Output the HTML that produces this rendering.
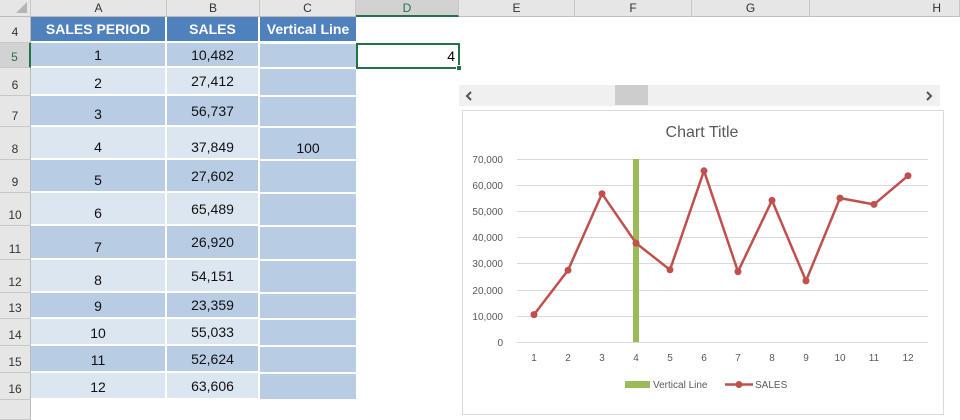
<!DOCTYPE html>
<html><head><meta charset="utf-8"><style>
*{margin:0;padding:0;box-sizing:border-box}
body{width:960px;height:409px;overflow:hidden;background:#fff;font-family:"Liberation Sans",sans-serif;position:relative}
.a{position:absolute}
.ch{position:absolute;top:0;height:17px;background:#e6e6e6;border-right:1px solid #c8c8c8;border-bottom:1px solid #bcbcbc;font-size:12px;color:#333;text-align:center;line-height:17px}
.rh{position:absolute;left:0;width:31px;background:#e6e6e6;border-bottom:1px solid #c8c8c8;border-right:1px solid #bcbcbc;font-size:12px;color:#333;text-align:center;display:flex;align-items:flex-end;justify-content:center;padding-bottom:3px}
.c{position:absolute;font-size:14px;color:#111;display:flex;align-items:center;justify-content:center;border-right:2px solid #fff;border-bottom:2px solid #fff}
.bt{align-items:flex-end;padding-bottom:3px}
</style></head><body>
<div class="ch" style="left:0;width:31px"><div class="a" style="right:3px;bottom:3px;width:0;height:0;border-left:11px solid transparent;border-bottom:11px solid #b4b4b4"></div></div>
<div class="ch" style="left:31px;width:136px">A</div>
<div class="ch" style="left:167px;width:93px">B</div>
<div class="ch" style="left:260px;width:96px">C</div>
<div class="ch" style="left:356px;width:103px;background:#d2d2d2;border-bottom:2px solid #217346;color:#217346">D</div>
<div class="ch" style="left:459px;width:116px">E</div>
<div class="ch" style="left:575px;width:117px">F</div>
<div class="ch" style="left:692px;width:118px">G</div>
<div class="ch" style="left:810px;width:150px;text-align:right;padding-right:18px">H</div>

<div class="rh" style="top:17px;height:26px">4</div>
<div class="rh" style="top:43px;height:25px;background:#d2d2d2;color:#217346;border-right:2px solid #217346">5</div>
<div class="rh" style="top:68px;height:28px">6</div>
<div class="rh" style="top:96px;height:31px">7</div>
<div class="rh" style="top:127px;height:33px">8</div>
<div class="rh" style="top:160px;height:33px">9</div>
<div class="rh" style="top:193px;height:33px">10</div>
<div class="rh" style="top:226px;height:34px">11</div>
<div class="rh" style="top:260px;height:33px">12</div>
<div class="rh" style="top:293px;height:26px">13</div>
<div class="rh" style="top:319px;height:27px">14</div>
<div class="rh" style="top:346px;height:27px">15</div>
<div class="rh" style="top:373px;height:27px">16</div>
<div class="rh" style="top:400px;height:20px"></div>

<div class="c" style="left:31px;top:17px;width:136px;height:26px;background:#4f81bd;color:#fff;font-weight:bold">SALES PERIOD</div>
<div class="c" style="left:167px;top:17px;width:93px;height:26px;background:#4f81bd;color:#fff;font-weight:bold">SALES</div>
<div class="c" style="left:260px;top:17px;width:96px;height:26px;background:#4f81bd;color:#fff;font-weight:bold;border-right:none">Vertical Line</div>

<div id="rows"></div>
<script>
var r=[[43,25,1,"10,482",0],[68,28,2,"27,412",1],[96,31,3,"56,737",0],[127,33,4,"37,849",1],[160,33,5,"27,602",0],[193,33,6,"65,489",1],[226,34,7,"26,920",0],[260,33,8,"54,151",1],[293,26,9,"23,359",0],[319,27,10,"55,033",1],[346,27,11,"52,624",0],[373,27,12,"63,606",1]];
var h="";
r.forEach(function(x){var bg=x[4]?"#dce6f1":"#b8cce4";
h+='<div class="c bt" style="left:31px;top:'+x[0]+'px;width:136px;height:'+x[1]+'px;background:'+bg+'">'+x[2]+'</div>';
h+='<div class="c'+(x[2]==4?' bt':'')+'" style="left:167px;top:'+x[0]+'px;width:93px;height:'+x[1]+'px;background:'+bg+'">'+x[3]+'</div>';
h+='<div class="c'+(x[2]==4?' bt':'')+'" style="left:260px;top:'+(x[0]+1)+'px;width:96px;height:'+x[1]+'px;background:#b8cce4;border-right:none">'+(x[2]==4?'100':'')+'</div>';});
document.getElementById("rows").innerHTML=h;
</script>
<div class="a" style="left:356px;top:43px;width:104px;height:26px;border:2px solid #217346;font-size:14px;text-align:right;padding-right:3px;line-height:22px">4</div>
<div class="a" style="left:456px;top:65px;width:6px;height:6px;background:#217346;border:1px solid #fff"></div>

<div class="a" style="left:459px;top:85px;width:481px;height:21px;background:#f0f0f0"></div>
<div class="a" style="left:615px;top:85px;width:33px;height:20px;background:#cdcdcd"></div>
<svg class="a" style="left:0;top:0" width="960" height="409">
<polyline points="471,92 467,96 471,100" fill="none" stroke="#555" stroke-width="2"/>
<polyline points="927,92 931,96 927,100" fill="none" stroke="#555" stroke-width="2"/>
</svg>

<div class="a" style="left:462px;top:110px;width:482px;height:305px;border:1px solid #d9d9d9;background:#fff"></div>
<svg class="a" style="left:0;top:0" width="960" height="409">
<g stroke="#d9d9d9" stroke-width="1">
<line x1="517" x2="928" y1="159.5" y2="159.5"/><line x1="517" x2="928" y1="185.5" y2="185.5"/><line x1="517" x2="928" y1="211.5" y2="211.5"/><line x1="517" x2="928" y1="237.5" y2="237.5"/><line x1="517" x2="928" y1="263.5" y2="263.5"/><line x1="517" x2="928" y1="290.5" y2="290.5"/><line x1="517" x2="928" y1="316.5" y2="316.5"/><line x1="517" x2="928" y1="342.5" y2="342.5"/>
</g>
<rect x="633" y="159" width="6" height="183" fill="#9bbb59"/>
<polyline fill="none" stroke="#c0504d" stroke-width="2.5" stroke-linejoin="round" points="534,314.6 568,270.3 602,193.7 636,243.1 670,269.8 704,170.8 738,271.6 772,200.4 806,280.9 840,198.1 874,204.4 908,175.7"/>
<g fill="#c0504d"><circle cx="534" cy="314.6" r="3.5"/><circle cx="568" cy="270.3" r="3.5"/><circle cx="602" cy="193.7" r="3.5"/><circle cx="636" cy="243.1" r="3.5"/><circle cx="670" cy="269.8" r="3.5"/><circle cx="704" cy="170.8" r="3.5"/><circle cx="738" cy="271.6" r="3.5"/><circle cx="772" cy="200.4" r="3.5"/><circle cx="806" cy="280.9" r="3.5"/><circle cx="840" cy="198.1" r="3.5"/><circle cx="874" cy="204.4" r="3.5"/><circle cx="908" cy="175.7" r="3.5"/></g>
<g font-family="Liberation Sans,sans-serif" font-size="10" fill="#595959" text-anchor="end">
<text x="503" y="163">70,000</text><text x="503" y="189">60,000</text><text x="503" y="215">50,000</text><text x="503" y="241">40,000</text><text x="503" y="267">30,000</text><text x="503" y="294">20,000</text><text x="503" y="320">10,000</text><text x="503" y="346">0</text>
</g>
<g font-family="Liberation Sans,sans-serif" font-size="10" fill="#595959" text-anchor="middle">
<text x="534" y="361">1</text><text x="568" y="361">2</text><text x="602" y="361">3</text><text x="636" y="361">4</text><text x="670" y="361">5</text><text x="704" y="361">6</text><text x="738" y="361">7</text><text x="772" y="361">8</text><text x="806" y="361">9</text><text x="840" y="361">10</text><text x="874" y="361">11</text><text x="908" y="361">12</text>
</g>
<text x="702" y="137" font-family="Liberation Sans,sans-serif" font-size="16" fill="#595959" text-anchor="middle">Chart Title</text>
<rect x="625" y="381" width="25" height="7" fill="#9bbb59"/>
<text x="653" y="388" font-family="Liberation Sans,sans-serif" font-size="10" fill="#595959">Vertical Line</text>
<line x1="725" x2="753" y1="384.5" y2="384.5" stroke="#c0504d" stroke-width="2.5"/>
<circle cx="739" cy="384.5" r="3.5" fill="#c0504d"/>
<text x="755" y="388" font-family="Liberation Sans,sans-serif" font-size="10" fill="#595959">SALES</text>
</svg>
</body></html>
